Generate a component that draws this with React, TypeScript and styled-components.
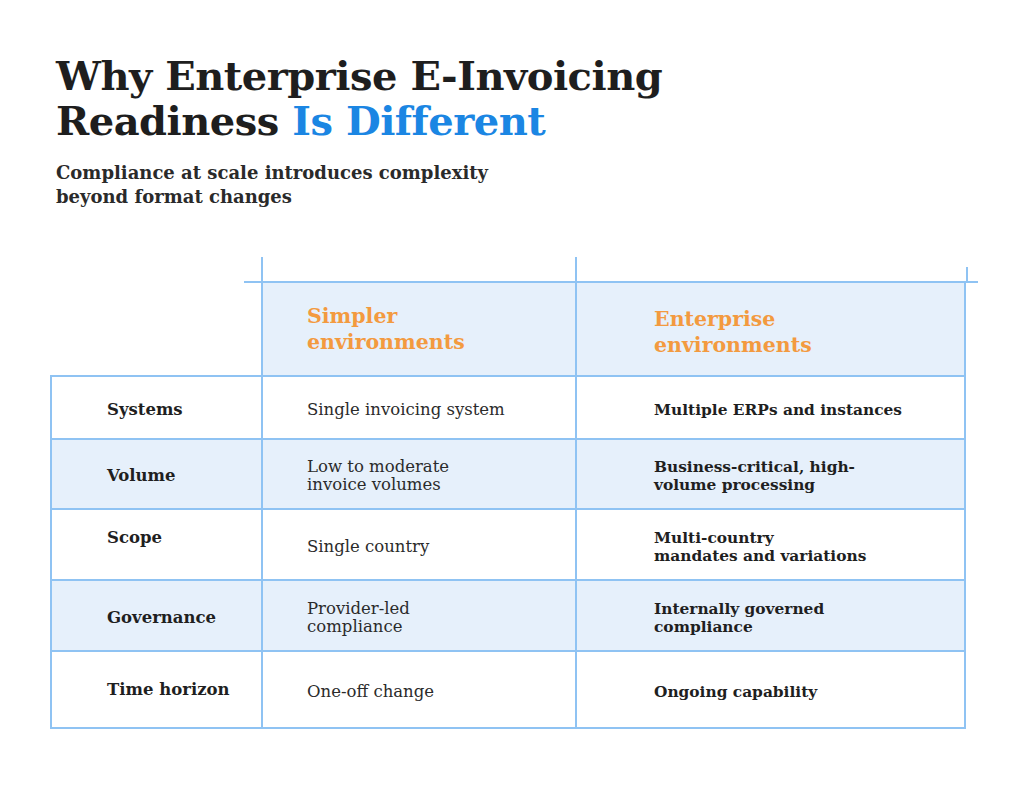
import React from "react";
import styled, { createGlobalStyle, css } from "styled-components";

const LINE = "#8fc3f3";
const FILL = "#e6f0fb";

const Global = createGlobalStyle`
  html, body { margin: 0; padding: 0; background: #ffffff; }
  body { font-family: "DejaVu Serif", serif; color: #222; }
`;

const Page = styled.div`
  width: 1024px;
  height: 785px;
  padding-top: 53px;
  box-sizing: border-box;
  background: #fff;
`;

const Intro = styled.header`
  padding-left: 56px;
`;

const Title = styled.h1`
  margin: 0;
  font-family: "DejaVu Serif", serif;
  font-weight: 700;
  font-size: 40px;
  line-height: 45px;
  color: #1e1e1e;
  letter-spacing: -0.5px;
`;

const Accent = styled.span`
  color: #1b86e3;
`;

const Subtitle = styled.p`
  margin: 18px 0 0;
  font-family: "DejaVu Serif", serif;
  font-weight: 700;
  font-size: 18px;
  line-height: 24px;
  color: #2a2a2a;
`;

const Table = styled.div`
  margin: 48px 0 0 50px;
  display: grid;
  grid-template-columns: 211px 314px 391px 12px;
  grid-template-rows: 24px 94px 63px 70px 71px 71px 79px;
`;

const Post = styled.div<{ $inset?: number }>`
  border-left: 2px solid ${LINE};
  margin-top: ${(p) => p.$inset ?? 0}px;
`;

const Blank = styled.div``;

const Stub = styled.div`
  background: linear-gradient(${LINE}, ${LINE}) right top / 17px 2px no-repeat;
`;

const Tail = styled.div`
  border-top: 2px solid ${LINE};
`;

const HeadCell = styled.div<{ $last?: boolean; $shift?: number }>`
  box-sizing: border-box;
  background: ${FILL};
  border-top: 2px solid ${LINE};
  border-left: 2px solid ${LINE};
  ${(p) => p.$last && css`border-right: 2px solid ${LINE};`}
  display: flex;
  align-items: center;
  padding-left: ${(p) => (p.$last ? 77 : 44)}px;
  padding-top: ${(p) => p.$shift ?? 0}px;
  font-family: "DejaVu Serif", serif;
  font-weight: 700;
  font-size: 20.5px;
  line-height: 26px;
  color: #f39a3f;
`;

const Cell = styled.div<{
  $kind: "label" | "plain" | "strong";
  $shade?: boolean;
  $bottom?: boolean;
  $raise?: number;
}>`
  box-sizing: border-box;
  display: flex;
  align-items: center;
  border-top: 2px solid ${LINE};
  border-left: 2px solid ${LINE};
  ${(p) => p.$kind === "strong" && css`border-right: 2px solid ${LINE};`}
  ${(p) => p.$bottom && css`border-bottom: 2px solid ${LINE};`}
  background: ${(p) => (p.$shade ? FILL : "#fff")};
  padding-left: ${(p) => (p.$kind === "label" ? 55 : p.$kind === "plain" ? 44 : 77)}px;
  padding-top: 4px;
  padding-bottom: ${(p) => p.$raise ?? 0}px;
  font-family: "DejaVu Serif", serif;
  font-weight: ${(p) => (p.$kind === "plain" ? 400 : 700)};
  font-size: ${(p) => (p.$kind === "strong" ? 15.4 : 16.5)}px;
  line-height: 18px;
  color: ${(p) => (p.$kind === "plain" ? "#2b2b2b" : "#1f1f1f")};
`;

type Row = { label: string; simple: string[]; ent: string[]; raise?: number };

const rows: Row[] = [
  { label: "Systems", simple: ["Single invoicing system"], ent: ["Multiple ERPs and instances"] },
  { label: "Volume", simple: ["Low to moderate", "invoice volumes"], ent: ["Business-critical, high-", "volume processing"] },
  { label: "Scope", simple: ["Single country"], ent: ["Multi-country", "mandates and variations"], raise: 18 },
  { label: "Governance", simple: ["Provider-led", "compliance"], ent: ["Internally governed", "compliance"] },
  { label: "Time horizon", simple: ["One-off change"], ent: ["Ongoing capability"], raise: 4 },
];

const Lines = ({ items }: { items: string[] }) => (
  <div>
    {items.map((t, i) => (
      <React.Fragment key={i}>
        {i > 0 && <br />}
        {t}
      </React.Fragment>
    ))}
  </div>
);

export default function App() {
  return (
    <>
      <Global />
      <Page>
        <Intro>
          <Title>
            Why Enterprise E-Invoicing
            <br />
            Readiness <Accent>Is Different</Accent>
          </Title>
          <Subtitle>
            Compliance at scale introduces complexity
            <br />
            beyond format changes
          </Subtitle>
        </Intro>
        <Table>
          <Blank />
          <Post />
          <Post />
          <Post $inset={10} />

          <Stub />
          <HeadCell>
            <Lines items={["Simpler", "environments"]} />
          </HeadCell>
          <HeadCell $last $shift={6}>
            <Lines items={["Enterprise", "environments"]} />
          </HeadCell>
          <Tail />

          {rows.map((r, i) => {
            const shade = i % 2 === 1;
            const bottom = i === rows.length - 1;
            return (
              <React.Fragment key={r.label}>
                <Cell $kind="label" $shade={shade} $bottom={bottom} $raise={r.raise}>
                  {r.label}
                </Cell>
                <Cell $kind="plain" $shade={shade} $bottom={bottom}>
                  <Lines items={r.simple} />
                </Cell>
                <Cell $kind="strong" $shade={shade} $bottom={bottom}>
                  <Lines items={r.ent} />
                </Cell>
                <Blank />
              </React.Fragment>
            );
          })}
        </Table>
      </Page>
    </>
  );
}
